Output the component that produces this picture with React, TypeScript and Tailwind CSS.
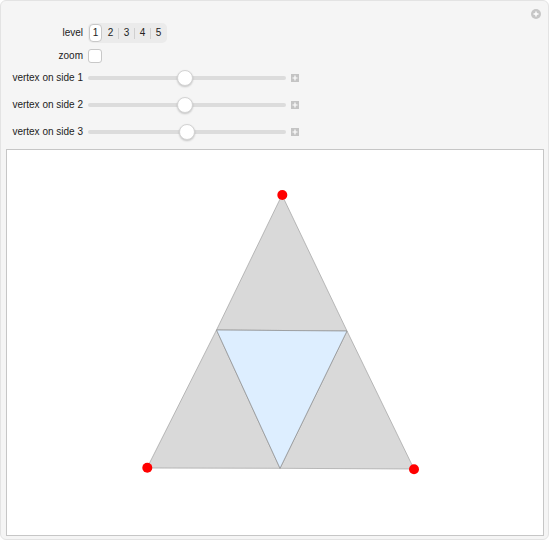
import { ReactNode } from 'react';

const font = { fontFamily: '"Liberation Sans", Arial, sans-serif' };

function Row({ label, children, className }: { label: string; children: ReactNode; className: string }) {
  return (
    <div className={`flex items-center h-[20px] ${className}`}>
      <div className="w-[82px] text-right text-[10px] text-[#222] pr-0 leading-none">{label}</div>
      <div className="ml-[5px] flex items-center">{children}</div>
    </div>
  );
}

function Slider({ pos }: { pos: number }) {
  return (
    <div className="flex items-center">
      <div className="relative w-[198px] h-[16px] flex items-center">
        <div className="w-full h-[4px] rounded-full bg-[#dcdcdc]" />
        <div
          className="absolute top-0 w-[16px] h-[16px] rounded-full bg-white border border-[#d4d4d4] shadow-[0_1px_2px_rgba(0,0,0,0.2)]"
          style={{ left: pos - 8 }}
        />
      </div>
      <div className="ml-[5px] w-[8px] h-[8px] bg-[#c4c4c4] flex items-center justify-center">
        <svg width="6" height="6" viewBox="0 0 6 6">
          <path d="M3 0.5V5.5M0.5 3H5.5" stroke="white" strokeWidth="1.2" />
        </svg>
      </div>
    </div>
  );
}

export default function App() {
  const levels = ['1', '2', '3', '4', '5'];
  return (
    <div className="w-[550px] h-[542px] bg-white" style={font}>
      <div className="relative w-[549px] h-[540px] rounded-[6px] border border-[#e3e3e3] bg-[#f5f5f5] flex flex-col">
        <div className="absolute right-[7px] top-[8px] w-[10px] h-[10px] rounded-full bg-[#c6c6c6] flex items-center justify-center">
          <svg width="6" height="6" viewBox="0 0 6 6">
            <path d="M3 0.5V5.5M0.5 3H5.5" stroke="white" strokeWidth="1.4" />
          </svg>
        </div>

        <div className="flex flex-col pt-[22px]">
          <Row label="level" className="">
            <div className="flex items-center h-[20px] rounded-[5px] bg-[#ebebeb] px-[1px]">
              {levels.map((l, i) => (
                <div key={l} className="flex items-center">
                  {i > 1 && <div className="w-px h-[11px] bg-[#d0d0d0]" />}
                  <div
                    className={`h-[18px] flex items-center justify-center text-[10px] leading-none text-[#222] ${
                      i === 0
                        ? 'w-[13px] bg-white rounded-[4px] border border-[#c8c8c8] mr-[1px]'
                        : 'w-[15px]'
                    }`}
                  >
                    {l}
                  </div>
                </div>
              ))}
            </div>
          </Row>
          <Row label="zoom" className="mt-[3px]">
            <div className="w-[14px] h-[14px] rounded-[3px] bg-white border border-[#c8c8c8]" />
          </Row>
          <Row label="vertex on side 1" className="mt-[2px]">
            <Slider pos={97} />
          </Row>
          <Row label="vertex on side 2" className="mt-[7px]">
            <Slider pos={97} />
          </Row>
          <Row label="vertex on side 3" className="mt-[7px]">
            <Slider pos={99} />
          </Row>
        </div>

        <div className="mt-[7px] ml-[5px] w-[538px] h-[387px] bg-white border border-[#c6c6c6]">
          <svg width="536" height="385" viewBox="7 149 536 385">
            <polygon points="282,194 216.5,329 347,330" fill="#d9d9d9" stroke="#a0a0a0" strokeWidth="0.7" />
            <polygon points="216.5,329 147,467 280,467.3" fill="#d9d9d9" stroke="#a0a0a0" strokeWidth="0.7" />
            <polygon points="347,330 280,467.3 414,468" fill="#d9d9d9" stroke="#a0a0a0" strokeWidth="0.7" />
            <polygon points="216.5,329 347,330 280,467.3" fill="#ddeeff" stroke="#8a8a8a" strokeWidth="0.7" />
            <circle cx="282.3" cy="194" r="5" fill="#ff0000" />
            <circle cx="147.3" cy="466.7" r="5" fill="#ff0000" />
            <circle cx="414" cy="468.3" r="5" fill="#ff0000" />
          </svg>
        </div>
      </div>
    </div>
  );
}
